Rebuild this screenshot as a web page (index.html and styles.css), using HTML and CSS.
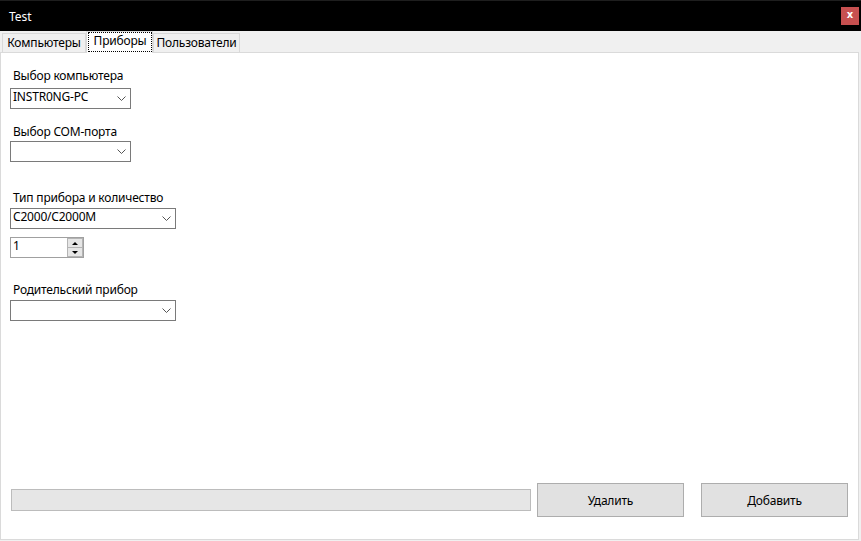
FILE: index.html
```html
<!DOCTYPE html>
<html lang="ru">
<head>
<meta charset="utf-8">
<title>Test</title>
<link rel="stylesheet" href="styles.css">
</head>
<body>
<div class="window">
  <div class="titlebar">
    <span class="title">Test</span>
    <div class="close">x</div>
  </div>
  <div class="tabs">
    <div class="tab tab-1">Компьютеры</div>
    <div class="tab tab-2 active"><span class="focus">Приборы</span></div>
    <div class="tab tab-3">Пользователи</div>
  </div>
  <div class="panel">
    <div class="form">
      <div class="label l1">Выбор компьютера</div>
      <div class="combo narrow c1">
        <span class="value">INSTR0NG-PC</span>
        <svg class="chev" width="9" height="5" viewBox="0 0 9 5"><polyline points="0.5,0.5 4.5,4.5 8.5,0.5" fill="none" stroke="#555" stroke-width="1"/></svg>
      </div>
      <div class="label l2">Выбор COM-порта</div>
      <div class="combo narrow c2">
        <span class="value"></span>
        <svg class="chev" width="9" height="5" viewBox="0 0 9 5"><polyline points="0.5,0.5 4.5,4.5 8.5,0.5" fill="none" stroke="#555" stroke-width="1"/></svg>
      </div>
      <div class="label l3">Тип прибора и количество</div>
      <div class="combo wide c3">
        <span class="value">C2000/C2000M</span>
        <svg class="chev" width="9" height="5" viewBox="0 0 9 5"><polyline points="0.5,0.5 4.5,4.5 8.5,0.5" fill="none" stroke="#555" stroke-width="1"/></svg>
      </div>
      <div class="numeric">
        <span class="value">1</span>
        <div class="spin">
          <div class="spin-btn"><span class="tri-up"></span></div>
          <div class="spin-btn"><span class="tri-down"></span></div>
        </div>
      </div>
      <div class="label l4">Родительский прибор</div>
      <div class="combo wide c4">
        <span class="value"></span>
        <svg class="chev" width="9" height="5" viewBox="0 0 9 5"><polyline points="0.5,0.5 4.5,4.5 8.5,0.5" fill="none" stroke="#555" stroke-width="1"/></svg>
      </div>
    </div>
    <div class="bottom">
      <div class="progress"></div>
      <button class="btn">Удалить</button>
      <button class="btn">Добавить</button>
    </div>
  </div>
</div>
</body>
</html>
```
FILE: styles.css
```css
* { box-sizing: border-box; }
html, body { margin: 0; padding: 0; }
body {
  background: #f0f0f0;
  font-family: "Noto Sans", "Segoe UI", sans-serif;
  font-size: 12px;
  letter-spacing: -0.2px;
  color: #000;
  overflow: hidden;
}
.window {
  width: 861px;
  height: 541px;
  display: flex;
  flex-direction: column;
}
.titlebar {
  height: 31px;
  flex: none;
  background: #000;
  border-top: 1px solid #1e1e1e;
  display: flex;
  align-items: center;
  justify-content: space-between;
  padding: 0 2px 0 9px;
}
.title { color: #fff; font-size: 12px; letter-spacing: 0; }
.close {
  width: 18px;
  height: 18px;
  background: #c75050;
  color: #fff;
  font-weight: bold;
  font-size: 10px;
  line-height: 16px;
  text-align: center;
  letter-spacing: 0;
  font-family: "DejaVu Sans", sans-serif;
}
.tabs {
  height: 21px;
  flex: none;
  display: flex;
  align-items: flex-end;
  padding-left: 2px;
}
.tab {
  height: 19px;
  border: 1px solid #d9d9d9;
  border-bottom: none;
  background: #f0f0f0;
  line-height: 17px;
  text-align: center;
  white-space: nowrap;
}
.tab-1 { width: 84px; }
.tab-2 { width: 67px; }
.tab-3 { width: 87px; }
.tab.active {
  height: 22px;
  margin-bottom: -1px;
  background: #fff;
  position: relative;
  z-index: 1;
  padding: 0 0 0 1px;
}
.focus {
  display: block;
  height: 20px;
  border: 1px dotted #000;
  line-height: 16px;
}
.panel {
  flex: 1;
  margin: 0 2px 1px 0;
  border: 1px solid #dadada;
  background: #fff;
  display: flex;
  flex-direction: column;
}
.form {
  padding: 15px 0 0 9px;
  display: flex;
  flex-direction: column;
  align-items: flex-start;
}
.label {
  height: 15px;
  line-height: 15px;
  margin-left: 3px;
  white-space: nowrap;
}
.l1 { margin-top: 0; }
.l2 { margin-top: 15px; }
.l3 { margin-top: 28px; }
.l4 { margin-top: 24px; }
.combo {
  height: 21px;
  border: 1px solid #7a7a7a;
  background: #fff;
  display: flex;
  align-items: center;
  padding: 0 4px 0 2px;
}
.combo .value {
  flex: 1;
  line-height: 16px;
  align-self: flex-start;
  white-space: nowrap;
}
.chev { flex: none; display: block; }
.narrow { width: 121px; }
.wide { width: 166px; }
.c1 { margin-top: 5px; }
.c2 { margin-top: 2px; }
.c3 { margin-top: 3px; }
.c4 { margin-top: 3px; }
.numeric {
  margin-top: 8px;
  width: 74px;
  height: 21px;
  border: 1px solid #a0a0a0;
  background: #fff;
  display: flex;
  padding-left: 2px;
}
.numeric .value {
  flex: 1;
  line-height: 16px;
}
.spin {
  width: 16px;
  display: flex;
  flex-direction: column;
}
.spin-btn {
  flex: 1;
  background: #e6e6e6;
  border: 1px solid #b4b4b4;
  display: flex;
  align-items: center;
  justify-content: center;
}
.spin-btn + .spin-btn { border-top: none; }
.tri-up, .tri-down {
  width: 0;
  height: 0;
  border-left: 3px solid transparent;
  border-right: 3px solid transparent;
}
.tri-up { border-bottom: 3px solid #000; }
.tri-down { border-top: 3px solid #000; }
.bottom {
  margin-top: auto;
  padding: 0 9px 22px 10px;
  display: flex;
  align-items: center;
}
.progress {
  width: 520px;
  height: 22px;
  background: #e6e6e6;
  border: 1px solid #bcbcbc;
  margin-right: 6px;
}
.btn {
  width: 147px;
  height: 34px;
  background: #e1e1e1;
  border: 1px solid #adadad;
  font-family: inherit;
  font-size: 12px;
  letter-spacing: -0.2px;
  color: #000;
  padding: 0;
  margin: 0;
}
.btn + .btn { margin-left: 17px; }
```
